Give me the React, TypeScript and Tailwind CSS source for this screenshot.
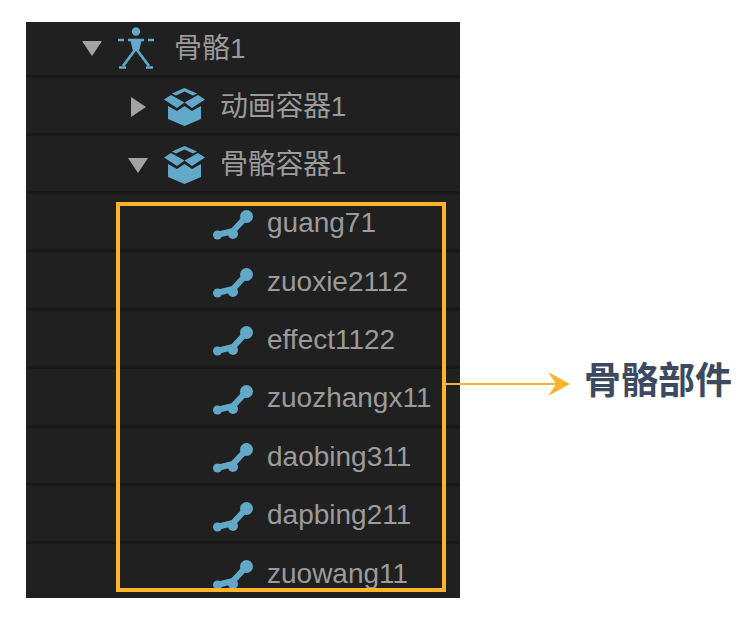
import React from 'react';

const FONT = "font-['Liberation_Sans','Noto_Sans_CJK_SC',sans-serif]";

function Caret({ open }: { open: boolean }) {
  return open ? (
    <svg width="20" height="15" viewBox="0 0 20 15" className="shrink-0">
      <path d="M0 0H20L10 15Z" fill="#a3a3a3" />
    </svg>
  ) : (
    <svg width="15" height="20" viewBox="0 0 15 20" className="shrink-0">
      <path d="M0 0L15 10L0 20Z" fill="#a3a3a3" />
    </svg>
  );
}

function SkeletonIcon() {
  return (
    <svg width="38" height="42" viewBox="0 0 38 42" className="shrink-0">
      <circle cx="19" cy="4.5" r="4.2" fill="#62a9c9" />
      <path d="M13 12H25L22 24H16Z" fill="#62a9c9" />
      <path d="M18 23L6 39M20 23L32 39" stroke="#62a9c9" strokeWidth="2.8" fill="none" />
      <path d="M1 13H7M11 13H27M31 13H37M2 40.5H9M29 40.5H36" stroke="#62a9c9" strokeWidth="2.4" fill="none" />
    </svg>
  );
}

function BoxIcon() {
  return (
    <svg width="41" height="38" viewBox="0 0 41 38" className="shrink-0">
      <path d="M20.5 0L33 5.5L29 7.5L20.5 3.5L12 7.5L8 5.5Z" fill="#62a9c9" />
      <path d="M0 11.5L7 7L20.5 14.5L13 20Z" fill="#62a9c9" />
      <path d="M41 11.5L34 7L20.5 14.5L28 20Z" fill="#62a9c9" />
      <path d="M4 18L13 23L20.5 18L28 23L37 18V31L20.5 38L4 31Z" fill="#62a9c9" />
    </svg>
  );
}

function BoneIcon() {
  return (
    <svg width="40" height="30" viewBox="0 0 40 30" className="shrink-0">
      <path d="M4 25L20 21L33 7" stroke="#62a9c9" strokeWidth="6" fill="none" />
      <circle cx="4.5" cy="25" r="4.5" fill="#62a9c9" />
      <circle cx="20" cy="24" r="5" fill="#62a9c9" />
      <circle cx="33.5" cy="6.5" r="6.5" fill="#62a9c9" />
    </svg>
  );
}

const bones = ['guang71', 'zuoxie2112', 'effect1122', 'zuozhangx11', 'daobing311', 'dapbing211', 'zuowang11'];

export default function App() {
  return (
    <div className={`${FONT} relative w-[756px] h-[620px] bg-white pl-[26px] pt-[22px]`}>
      <div className="w-[434px] h-[576px] bg-[#202020] overflow-hidden text-[#9b9b9b] text-[28px] leading-none">
        <div className="h-[56px] flex items-center border-b-[3px] border-[#191919] pl-[56px]">
          <Caret open />
          <div className="ml-[15px] mt-[-1px]"><SkeletonIcon /></div>
          <span className="ml-[19px]">骨骼1</span>
        </div>
        <div className="h-[58px] flex items-center border-b-[3px] border-[#191919] pl-[105px] pt-[3px]">
          <Caret open={false} />
          <div className="ml-[18px]"><BoxIcon /></div>
          <span className="ml-[15px] tracking-[-0.3px]">动画容器1</span>
        </div>
        <div className="h-[58px] flex items-center border-b-[3px] border-[#191919] pl-[102px] pt-[3px]">
          <Caret open />
          <div className="ml-[16px]"><BoxIcon /></div>
          <span className="ml-[15px] tracking-[-0.3px]">骨骼容器1</span>
        </div>
        {bones.map((name) => (
          <div key={name} className="h-[58.4px] flex items-center border-b-[3px] border-[#191919] pl-[187px]">
            <div className="mt-[6px]"><BoneIcon /></div>
            <span className="ml-[14px] mt-[3px]">{name}</span>
          </div>
        ))}
      </div>

      {/* annotation */}
      <div className="absolute left-[116px] top-[202px] w-[330px] h-[390px] border-4 border-[#fdb32b]" />
      <svg className="absolute left-[446px] top-[372px]" width="126" height="24" viewBox="0 0 126 24">
        <path d="M0 12H120" stroke="#fdb32b" strokeWidth="2" fill="none" />
        <path d="M102 0L124 12L102 24L110 12Z" fill="#fdb32b" />
      </svg>
      <span className="absolute left-[584px] top-[360px] text-[37px] leading-[44px] font-bold text-[#3b4a60]">骨骼部件</span>
    </div>
  );
}
